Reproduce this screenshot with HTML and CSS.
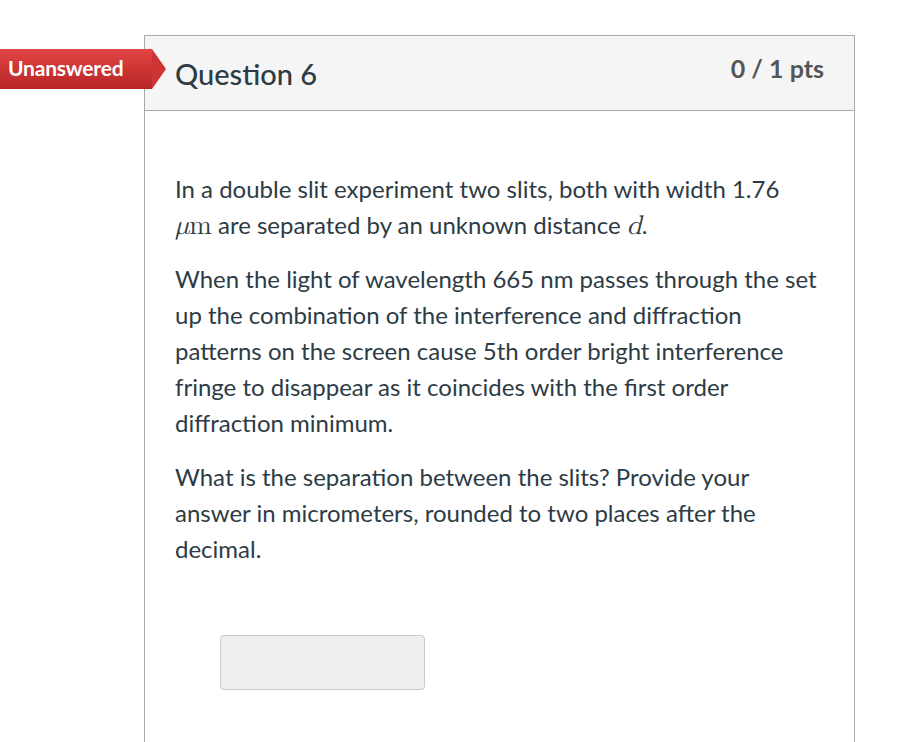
FILE: index.html
```html
<!DOCTYPE html>
<html>
<head>
<meta charset="utf-8">
<link rel="stylesheet" href="styles.css">
</head>
<body>
<div class="page">
  <div class="badge">Unanswered</div>
  <div class="card">
    <div class="header">
      <div class="title">Question 6</div>
      <div class="pts">0 / 1 pts</div>
    </div>
    <div class="content">
      <p>In a double slit experiment two slits, both with width 1.76 <span class="math"><i>μ</i>m</span> are separated by an unknown distance <span class="math"><i>d</i></span>.</p>
      <p>When the light of wavelength 665 nm passes through the set up the combination of the interference and diffraction patterns on the screen cause 5th order bright interference fringe to disappear as it coincides with the first order diffraction minimum.</p>
      <p>What is the separation between the slits? Provide your answer in micrometers, rounded to two places after the decimal.</p>
      <div class="answer"><input class="field" type="text"></div>
    </div>
  </div>
</div>
</body>
</html>
```

FILE: styles.css
```css
html, body {
  margin: 0;
  padding: 0;
  background: #fff;
}
body {
  font-family: Lato, "Liberation Sans", sans-serif;
  color: #2d3b45;
  overflow: hidden;
}
.page {
  position: relative;
  padding-top: 35px;
  padding-left: 144px;
  width: 711px;
}
.badge {
  position: absolute;
  left: 0;
  top: 49px;
  height: 40px;
  width: 152px;
  box-sizing: border-box;
  padding-left: 8px;
  line-height: 38px;
  color: #fff;
  font-weight: 700;
  font-size: 21px;
  letter-spacing: -0.2px;
  background: linear-gradient(#e34545, #b72424);
  z-index: 2;
}
.badge::after {
  content: "";
  position: absolute;
  right: -14px;
  top: 0;
  border-top: 20px solid transparent;
  border-bottom: 20px solid transparent;
  border-left: 14px solid #cd3434;
}
.card {
  border: 1px solid #aaa;
  border-bottom: none;
  height: 720px;
}
.header {
  background: #f5f5f5;
  border-bottom: 1px solid #aaa;
  height: 74px;
  display: flex;
  justify-content: space-between;
  align-items: flex-start;
  padding: 0 30px;
}
.title {
  font-size: 29px;
  margin-top: 20px;
  font-weight: 500;
}
.pts {
  font-size: 25px;
  font-weight: 700;
  color: #555;
  margin-top: 17px;
}
.content {
  padding: 60px 30px 0 30px;
  font-size: 24px;
  line-height: 36px;
  width: 643px;
}
.content p {
  margin: 0 0 18px 0;
}
.math {
  font-family: "Latin Modern Math", "DejaVu Serif", "Liberation Serif", serif;
  font-size: 27px;
  line-height: 1;
}
.math i {
  font-style: italic;
}
.answer {
  padding-top: 50px;
  padding-left: 45px;
}
.field {
  display: block;
  width: 205px;
  height: 55px;
  box-sizing: border-box;
  background: #eeeeee;
  border: 1px solid #c9c9c9;
  border-radius: 4px;
}
```
